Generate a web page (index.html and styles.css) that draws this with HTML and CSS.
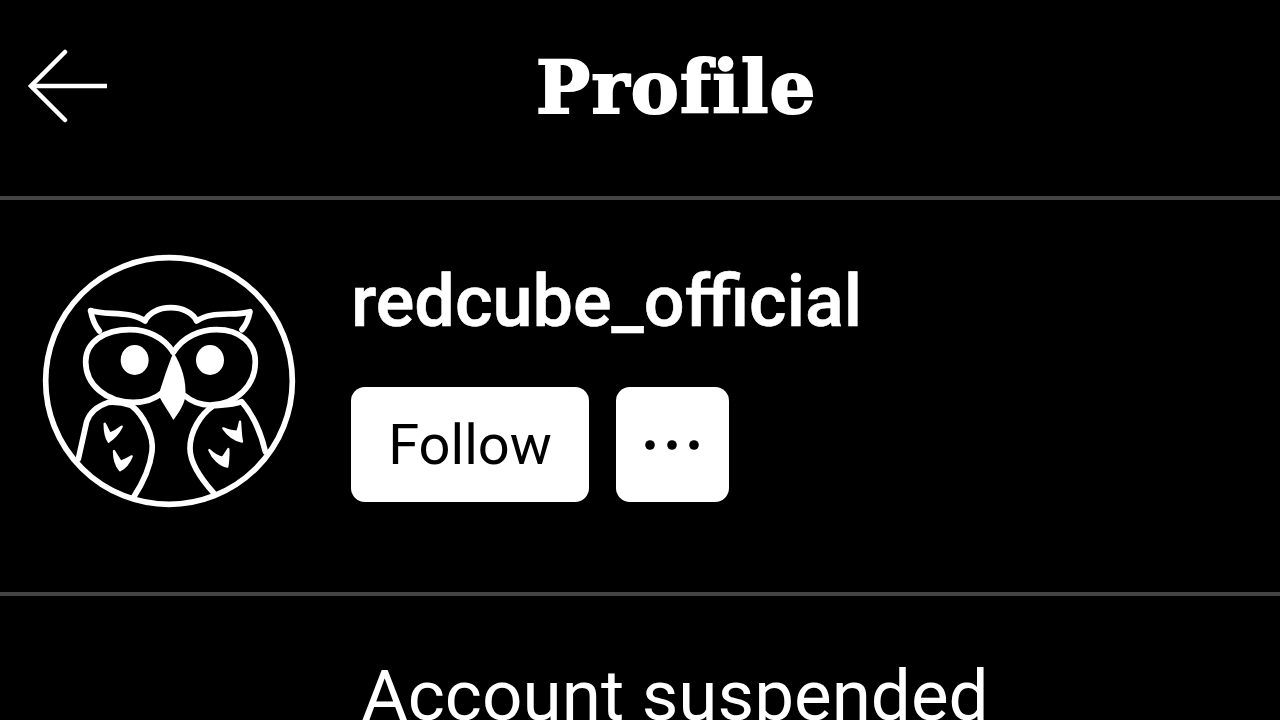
FILE: index.html
```html
<!DOCTYPE html>
<html lang="en">
<head>
  <meta charset="UTF-8" />
  <meta name="viewport" content="width=device-width, initial-scale=1.0"/>
  <title>Profile</title>
  <link rel="stylesheet" href="styles.css">
</head>
<body>
  <div class="app">
    <header class="top-bar">
      <button class="back-btn" aria-label="Back">
        <svg width="80" height="74" viewBox="0 0 80 74" fill="none" stroke="#fff" stroke-width="4.5" stroke-linecap="round">
          <path d="M37 3 L3 37 L37 71" stroke-linejoin="miter"/>
          <path d="M3 37 H79" stroke-linecap="butt"/>
        </svg>
      </button>
      <h1>Profile</h1>
    </header>

    <section class="profile">
      <svg class="avatar" viewBox="33 27 768 768" fill="none" stroke="#fff" stroke-width="17" stroke-linecap="round" stroke-linejoin="round">
        <circle cx="417" cy="408" r="370"/>
        <!-- brow -->
        <path d="M182 197 C230 212 300 196 345 228 C355 205 385 188 422 188 C460 188 490 205 500 228 C545 196 610 215 660 200 C656 220 650 238 636 254"/>
        <path d="M182 197 C186 220 194 240 208 258"/>
        <!-- eyes -->
        <path d="M430 322 C400 275 350 254 300 254 C225 254 167 290 167 350 C167 420 230 472 310 472 C345 472 375 462 398 442"/>
        <path d="M430 322 C460 275 510 254 560 254 C630 254 676 295 676 350 C676 420 620 480 540 480 C510 480 485 470 464 452"/>
        <ellipse cx="314" cy="345" rx="42" ry="45" fill="#fff" stroke="none"/>
        <ellipse cx="540" cy="345" rx="42" ry="45" fill="#fff" stroke="none"/>
        <!-- beak -->
        <path d="M430 322 C415 360 398 410 386 450 C400 480 420 505 430 525 C445 505 462 480 466 455 C470 410 455 360 430 322 Z" fill="#fff" stroke="none"/>
        <!-- wings -->
        <path d="M145 642 L170 530 C180 500 205 482 235 472 C260 470 285 475 305 482 C340 510 372 570 366 620 C360 670 335 720 310 758"/>
        <path d="M706 620 C692 560 670 510 635 470 C610 480 575 480 550 482 C510 510 480 560 480 610 C480 660 520 710 552 745"/>
        <!-- feathers -->
        <g stroke-width="7" fill="#fff">
          <path d="M224 536 C224 560 228 578 236 590 C250 580 265 565 275 545 C262 555 250 562 240 566 C235 558 230 546 224 536 Z"/>
          <path d="M252 618 C252 642 258 662 270 676 C285 668 298 652 305 634 C292 642 282 648 272 650 C265 640 258 628 252 618 Z"/>
          <path d="M630 530 C632 555 632 575 636 590 C618 586 595 572 580 550 C595 556 610 560 622 560 C626 550 628 540 630 530 Z"/>
          <path d="M595 612 C596 632 594 650 592 665 C570 660 548 640 538 615 C552 628 565 636 578 638 C584 630 590 620 595 612 Z"/>
        </g>
      </svg>
      <div class="info">
        <h2 class="username">redcube_official</h2>
        <div class="actions">
          <button class="follow-btn">Follow</button>
          <button class="more-btn" aria-label="More">
            <svg width="56" height="10" viewBox="0 0 56 10" fill="#000">
              <circle cx="5" cy="5" r="4.8"/>
              <circle cx="27" cy="5" r="4.8"/>
              <circle cx="49" cy="5" r="4.8"/>
            </svg>
          </button>
        </div>
      </div>
    </section>

    <p class="status">Account suspended</p>
  </div>
</body>
</html>
```

FILE: styles.css
```css
* {
  box-sizing: border-box;
  font-family: 'Roboto', sans-serif;
}

html, body {
  margin: 0;
  padding: 0;
  height: 100%;
  background: #000;
  overflow: hidden;
}

.app {
  height: 720px;
  overflow: hidden;
  color: #fff;
}

.top-bar {
  display: flex;
  align-items: center;
  gap: 428px;
  height: 200px;
  padding: 0 0 25px 28px;
  border-bottom: 4px solid #444;
}

.back-btn {
  display: flex;
  padding: 0;
  background: none;
  border: none;
}

h1 {
  margin: 4px 0 0;
  font-family: 'DejaVu Serif', serif;
  font-size: 72px;
  font-weight: 700;
  font-variant-ligatures: none;
  letter-spacing: 1.3px;
  line-height: 80px;
  color: #fff;
  -webkit-text-stroke: 2px #fff;
}

.profile {
  display: flex;
  align-items: flex-start;
  gap: 54px;
  height: 396px;
  padding: 54px 0 0 41px;
  border-bottom: 4px solid #444;
}

.avatar {
  width: 256px;
  height: 256px;
  flex-shrink: 0;
}

.info {
  display: flex;
  flex-direction: column;
  gap: 39px;
  padding-top: 2px;
}

.username {
  margin: 0;
  font-size: 72px;
  font-weight: 500;
  line-height: 92px;
  -webkit-text-stroke: 0.6px #fff;
}

.actions {
  display: flex;
  gap: 27px;
}

.actions button {
  height: 115px;
  background: #fff;
  color: #000;
  border: none;
  border-radius: 14px;
}

.follow-btn {
  width: 238px;
  padding: 0;
  font-size: 56px;
}

.more-btn {
  width: 113px;
  display: flex;
  align-items: center;
  justify-content: center;
  padding: 0;
}

.status {
  margin: 60px 0 0;
  padding-left: 70px;
  text-align: center;
  font-size: 71px;
  line-height: 80px;
}
```
